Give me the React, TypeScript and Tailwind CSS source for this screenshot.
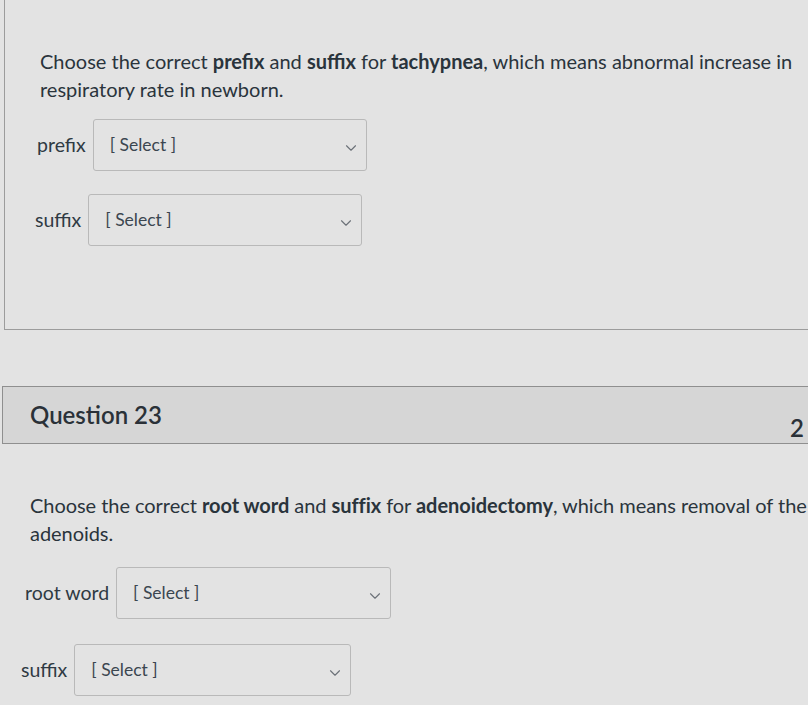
import { ChevronDown } from "lucide-react";

function SelectBox({ width }: { width: string }) {
  return (
    <div className={`${width} h-[52px] border border-[#b9b9b9] rounded-[3px] flex items-center justify-between pl-[16px] pr-[6px]`}>
      <span className="text-[17.5px] text-[#3b4650]">[ Select ]</span>
      <ChevronDown className="w-[18px] h-[18px] text-[#6b7178] mt-[6px]" strokeWidth={1.5} />
    </div>
  );
}

function Row({ label, width, indent }: { label: string; width: string; indent: string }) {
  return (
    <div className={`flex items-center gap-[7px] ${indent}`}>
      <span className="text-[19.5px] text-[#2f3a43]">{label}</span>
      <SelectBox width={width} />
    </div>
  );
}

export default function App() {
  return (
    <div className="min-h-screen h-[705px] overflow-hidden bg-[#e3e3e3] font-['Lato','Liberation_Sans',sans-serif] text-[#2a343c]">
      {/* previous question, bottom half */}
      <div className="ml-[4px] h-[330px] border-l border-b border-[#9c9c9c] pt-[47px] pl-[35px]">
        <p className="text-[20px] leading-[28px] whitespace-nowrap">
          Choose the correct <b className="font-bold">prefix</b> and <b className="font-bold">suffix</b> for{" "}
          <b className="font-bold">tachypnea</b>, which means abnormal increase in
          <br />
          respiratory rate in newborn.
        </p>
        <div className="mt-[16px] flex flex-col gap-[23px]">
          <Row label="prefix" width="w-[274px]" indent="ml-[-3px]" />
          <Row label="suffix" width="w-[274px]" indent="ml-[-5px]" />
        </div>
      </div>

      {/* Question 23 */}
      <div className="mt-[56px]">
        <div className="ml-[2px] h-[58px] bg-[#d6d6d6] border-l border-t border-b border-[#8f8f8f] flex items-center justify-between pl-[27px] pr-[4px]">
          <h2 className="text-[24px] font-semibold text-[#2a3138]">Question 23</h2>
          <span className="text-[24px] font-semibold text-[#2a3138] mt-[26px]">2</span>
        </div>
        <div className="pt-[47px] pl-[30px]">
          <p className="text-[20px] leading-[28px] tracking-[-0.05px] whitespace-nowrap">
            Choose the correct <b className="font-bold">root word</b> and <b className="font-bold">suffix</b> for{" "}
            <b className="font-bold">adenoidectomy</b>, which means removal of the
            <br />
            adenoids.
          </p>
          <div className="mt-[20px] flex flex-col gap-[25px]">
            <Row label="root word" width="w-[275px]" indent="ml-[-5px]" />
            <Row label="suffix" width="w-[277px]" indent="ml-[-9px]" />
          </div>
        </div>
      </div>
    </div>
  );
}
